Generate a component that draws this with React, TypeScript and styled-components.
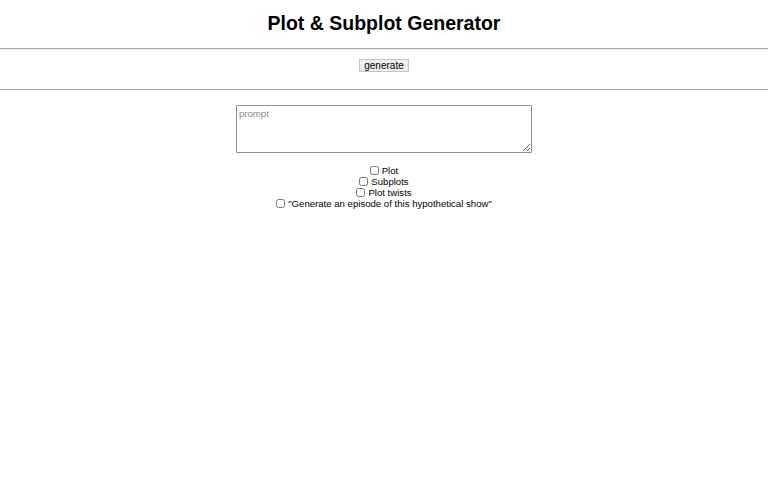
import React, { useState } from 'react';
import styled, { createGlobalStyle } from 'styled-components';

const GlobalStyle = createGlobalStyle`
  html, body {
    margin: 0;
    padding: 0;
    background: #fff;
  }
  body {
    font-family: 'Liberation Sans', Arial, sans-serif;
    color: #000;
  }
`;

const options = [
  'Plot',
  'Subplots',
  'Plot twists',
  '"Generate an episode of this hypothetical show"',
];

export default function App() {
  const [prompt, setPrompt] = useState('');
  const [checked, setChecked] = useState<boolean[]>(options.map(() => false));

  return (
    <Page>
      <GlobalStyle />
      <Title>Plot &amp; Subplot Generator</Title>
      <Rule />
      <Toolbar>
        <GenerateButton type="button">generate</GenerateButton>
      </Toolbar>
      <Rule />
      <Form>
        <Prompt
          placeholder="prompt"
          value={prompt}
          onChange={e => setPrompt(e.target.value)}
        />
        <Options>
          {options.map((label, i) => (
            <Option key={label}>
              <Check
                type="checkbox"
                checked={checked[i]}
                onChange={() =>
                  setChecked(c => c.map((v, j) => (j === i ? !v : v)))
                }
              />
              {label}
            </Option>
          ))}
        </Options>
      </Form>
    </Page>
  );
}

const Page = styled.div`
  display: flex;
  flex-direction: column;
`;

const Title = styled.h1`
  margin: 12px 0 0;
  height: 36px;
  font-size: 19.5px;
  font-weight: bold;
  line-height: 23px;
  text-align: center;
`;

const Rule = styled.div`
  height: 1px;
  background: #a8a8a8;
  border-bottom: 1px solid #f0f0f0;
`;

const Toolbar = styled.div`
  display: flex;
  justify-content: center;
  padding: 9px 0 17px;
`;

const GenerateButton = styled.button`
  box-sizing: border-box;
  font-family: 'Liberation Sans', Arial, sans-serif;
  font-size: 10px;
  line-height: 11px;
  padding: 0 4px;
  height: 13px;
  color: #000;
  background: #efefef;
  border: 1px solid #c4c4c4;
  border-radius: 0;
`;

const Form = styled.div`
  display: flex;
  flex-direction: column;
  align-items: center;
  padding-top: 14px;
`;

const Prompt = styled.textarea`
  box-sizing: border-box;
  width: 296px;
  height: 48px;
  padding: 2px;
  font-family: 'Liberation Sans', Arial, sans-serif;
  font-size: 9.6px;
  border: 1px solid #8f8f8f;
  border-radius: 1px;
  resize: both;

  &::placeholder {
    color: #8a8a8a;
  }
`;

const Options = styled.div`
  display: flex;
  flex-direction: column;
  align-items: center;
  margin-top: 12px;
`;

const Option = styled.label`
  display: flex;
  align-items: center;
  height: 11px;
  font-size: 9.6px;
  line-height: 11px;
`;

const Check = styled.input`
  width: 9px;
  height: 9px;
  margin: 0 3px 0 0;
`;
